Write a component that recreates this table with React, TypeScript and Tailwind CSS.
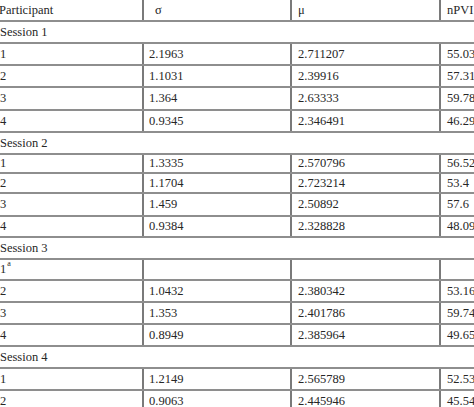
type Row =
  | { kind: "head"; h: number }
  | { kind: "session"; label: string; h: number }
  | { kind: "data"; p: string; sup?: string; sigma: string; mu: string; npvi: string; h: number };

const rows: Row[] = [
  { kind: "head", h: 22 },
  { kind: "session", label: "Session 1", h: 22 },
  { kind: "data", p: "1", sigma: "2.1963", mu: "2.711207", npvi: "55.03", h: 22 },
  { kind: "data", p: "2", sigma: "1.1031", mu: "2.39916", npvi: "57.31", h: 22 },
  { kind: "data", p: "3", sigma: "1.364", mu: "2.63333", npvi: "59.78", h: 23 },
  { kind: "data", p: "4", sigma: "0.9345", mu: "2.346491", npvi: "46.29", h: 22 },
  { kind: "session", label: "Session 2", h: 22 },
  { kind: "data", p: "1", sigma: "1.3335", mu: "2.570796", npvi: "56.52", h: 19 },
  { kind: "data", p: "2", sigma: "1.1704", mu: "2.723214", npvi: "53.4", h: 20 },
  { kind: "data", p: "3", sigma: "1.459", mu: "2.50892", npvi: "57.6", h: 23 },
  { kind: "data", p: "4", sigma: "0.9384", mu: "2.328828", npvi: "48.09", h: 21 },
  { kind: "session", label: "Session 3", h: 22 },
  { kind: "data", p: "1", sup: "a", sigma: "", mu: "", npvi: "", h: 21 },
  { kind: "data", p: "2", sigma: "1.0432", mu: "2.380342", npvi: "53.16", h: 22 },
  { kind: "data", p: "3", sigma: "1.353", mu: "2.401786", npvi: "59.74", h: 22 },
  { kind: "data", p: "4", sigma: "0.8949", mu: "2.385964", npvi: "49.65", h: 22 },
  { kind: "session", label: "Session 4", h: 22 },
  { kind: "data", p: "1", sigma: "1.2149", mu: "2.565789", npvi: "52.53", h: 22 },
  { kind: "data", p: "2", sigma: "0.9063", mu: "2.445946", npvi: "45.54", h: 22 },
];

const cols = "grid grid-cols-[142px_148px_149px_60px]";
const line = "border-b-2 border-[#8e8e8e]";
const vline = "border-l-2 border-[#7a7a7a]";

export default function App() {
  return (
    <div
      className="w-[474px] h-[407px] overflow-hidden bg-white text-[#262626] text-[12.5px] leading-none"
      style={{ fontFamily: '"Liberation Serif", "Times New Roman", serif' }}
    >
      <div className="w-[499px]">
        {rows.map((r, i) => {
          if (r.kind === "session") {
            return (
              <div key={i} className={`flex items-center ${line}`} style={{ height: r.h }}>
                <span>{r.label}</span>
              </div>
            );
          }
          if (r.kind === "head") {
            return (
              <div key={i} className={`${cols} ${line}`} style={{ height: r.h }}>
                <div className="flex items-center -ml-[1px]">Participant</div>
                <div className={`flex items-center pl-[11px] ${vline}`}>σ</div>
                <div className={`flex items-center pl-[6px] ${vline}`}>μ</div>
                <div className={`flex items-center pl-[6px] ${vline}`}>nPVI</div>
              </div>
            );
          }
          return (
            <div key={i} className={`${cols} ${line}`} style={{ height: r.h }}>
              <div className="flex items-center">
                {r.p}
                {r.sup && <sup className="text-[8px] ml-[1px] -mt-[3px]">{r.sup}</sup>}
              </div>
              <div className={`flex items-center pl-[5px] ${vline}`}>{r.sigma}</div>
              <div className={`flex items-center pl-[6px] ${vline}`}>{r.mu}</div>
              <div className={`flex items-center pl-[6px] ${vline}`}>{r.npvi}</div>
            </div>
          );
        })}
      </div>
    </div>
  );
}
